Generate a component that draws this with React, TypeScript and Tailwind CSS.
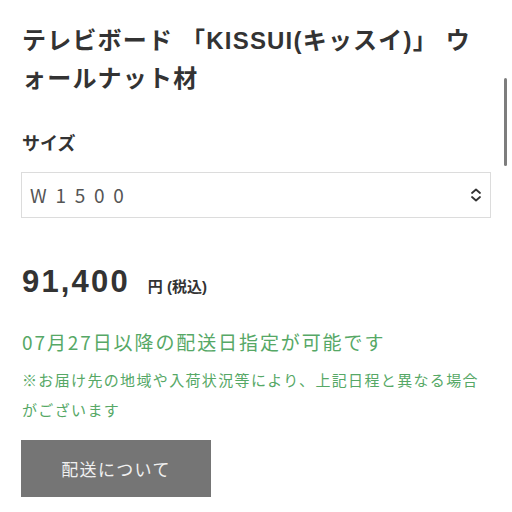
export default function App() {
  const sans = { fontFamily: '"Liberation Sans", "Noto Sans CJK JP", sans-serif' };
  const jp = { fontFamily: '"Noto Sans CJK JP", sans-serif' };

  return (
    <div className="relative w-[512px] h-[512px] overflow-hidden bg-white text-[#333]">
      {/* scrollbar overlay */}
      <div className="absolute left-[504px] top-[78px] w-[3px] h-[88px] rounded-full bg-[#7d7d7d]" />

      <div className="pl-[22px] pr-[21px] pt-[22px]">
        <h1 className="text-[24px] leading-[38px] font-bold tracking-[0.05em]" style={sans}>
          テレビボード 「KISSUI(キッスイ)」 ウォールナット材
        </h1>

        <div className="mt-[30px] text-[18px] leading-[28px] font-bold" style={jp}>
          サイズ
        </div>

        <div className="mt-[16px] -ml-px h-[46px] border border-[#dcdcdc] flex items-center justify-between pl-[8px] pr-[8px]">
          <span className="text-[19px] text-[#555] tracking-[0.46em]" style={jp}>
            W1500
          </span>
          <svg width="12" height="16" viewBox="0 0 12 16" fill="none" stroke="#333" strokeWidth="1.8" strokeLinecap="round" strokeLinejoin="round">
            <path d="M2 6 L6 2.5 L10 6" />
            <path d="M2 10 L6 13.5 L10 10" />
          </svg>
        </div>

        <div className="mt-[44px] flex items-baseline h-[40px]" style={sans}>
          <span className="text-[31px] leading-[40px] font-bold tracking-[0.07em]">91,400</span>
          <span className="ml-[18px] text-[15px] font-bold">円 (税込)</span>
        </div>

        <div className="mt-[25px] text-[#56a866]" style={jp}>
          <div className="text-[19px] leading-[30px] tracking-[0.1em]">
            07月27日以降の配送日指定が可能です
          </div>
          <div className="mt-[8px] text-[15px] leading-[30px] tracking-[0.09em]">
            ※お届け先の地域や入荷状況等により、上記日程と異なる場合がございます
          </div>
        </div>

        <button
          className="mt-[15px] -ml-px w-[190px] h-[57px] bg-[#757575] text-[#f0f0f0] text-[17px] tracking-[0.08em] flex items-center justify-center"
          style={jp}
        >
          配送について
        </button>
      </div>
    </div>
  );
}
